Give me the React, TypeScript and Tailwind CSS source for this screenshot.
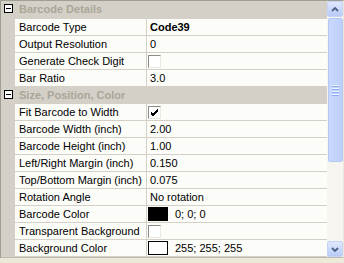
import React from 'react';

type Row = {
  name: string;
  value?: string;
  bold?: boolean;
  check?: boolean;
  swatch?: string;
};

type Section = { title: string; rows: Row[] };

const SECTIONS: Section[] = [
  {
    title: 'Barcode Details',
    rows: [
      { name: 'Barcode Type', value: 'Code39', bold: true },
      { name: 'Output Resolution', value: '0' },
      { name: 'Generate Check Digit', check: false },
      { name: 'Bar Ratio', value: '3.0' },
    ],
  },
  {
    title: 'Size, Position, Color',
    rows: [
      { name: 'Fit Barcode to Width', check: true },
      { name: 'Barcode Width (inch)', value: '2.00' },
      { name: 'Barcode Height (inch)', value: '1.00' },
      { name: 'Left/Right Margin (inch)', value: '0.150' },
      { name: 'Top/Bottom Margin (inch)', value: '0.075' },
      { name: 'Rotation Angle', value: 'No rotation' },
      { name: 'Barcode Color', swatch: 'bg-black', value: '0; 0; 0' },
      { name: 'Transparent Background', check: false },
      { name: 'Background Color', swatch: 'bg-white', value: '255; 255; 255' },
    ],
  },
];

function MinusBox() {
  return (
    <div className="w-[9px] h-[9px] border border-black bg-white flex items-center justify-center">
      <div className="w-[5px] h-[1px] bg-black" />
    </div>
  );
}

function CheckBox({ checked }: { checked: boolean }) {
  return (
    <div className="w-[13px] h-[13px] bg-white border-t border-l border-[#8c8c86] border-r-[#ebe9e2] border-b-[#ebe9e2] border-r border-b flex items-center justify-center">
      {checked && (
        <svg width="9" height="9" viewBox="0 0 9 9">
          <path d="M1 4 L3 6 L8 1 M1 5 L3 7 L8 2 M1 6 L3 8 L8 3" stroke="#000" strokeWidth="1" fill="none" />
        </svg>
      )}
    </div>
  );
}

function Header({ title, first }: { title: string; first: boolean }) {
  return (
    <div
      className={`flex h-[17px] bg-[#d4d0c8] ${first ? 'h-[16px]' : 'border-t border-[#d4d0c8]'}`}
    >
      <div className="w-[14px] flex justify-center pt-[3px] pl-[1px]">
        <MinusBox />
      </div>
      <div className="pl-[4px] leading-[16px] font-bold text-[#a9a697]">{title}</div>
    </div>
  );
}

function PropRow({ row }: { row: Row }) {
  return (
    <div className="flex h-[17px] border-t border-[#d4d0c8]">
      <div className="w-[14px] bg-[#d4d0c8]" />
      <div className="w-[132px] bg-[#fcfcf9] border-r border-[#d4d0c8] pl-[4px] leading-[16px] whitespace-nowrap overflow-hidden">
        {row.name}
      </div>
      <div className="flex-1 bg-[#fcfcf9] flex items-center whitespace-nowrap overflow-hidden">
        {row.check !== undefined ? (
          <div className="pl-[1px]">
            <CheckBox checked={row.check} />
          </div>
        ) : row.swatch ? (
          <>
            <div className={`ml-[1px] w-[20px] h-[14px] border border-black ${row.swatch}`} />
            <span className="pl-[7px] leading-[16px]">{row.value}</span>
          </>
        ) : (
          <span className={`pl-[3px] leading-[16px] ${row.bold ? 'font-bold' : ''}`}>{row.value}</span>
        )}
      </div>
    </div>
  );
}

function ScrollButton({ down }: { down?: boolean }) {
  return (
    <div className="h-[16px] rounded-[2px] border border-[#c4d4f8] bg-gradient-to-b from-[#dfe8fd] to-[#b8cbf8] flex items-center justify-center">
      <svg width="8" height="5" viewBox="0 0 8 5">
        <path
          d={down ? 'M1 1 L4 4 L7 1' : 'M1 4 L4 1 L7 4'}
          stroke="#4d6185"
          strokeWidth="1.8"
          fill="none"
        />
      </svg>
    </div>
  );
}

function ScrollBar() {
  return (
    <div className="w-[16px] flex flex-col bg-[#f6f5f0]">
      <ScrollButton />
      <div className="flex-1 pt-[1px] pl-[1px]">
        <div className="h-[144px] rounded-[2px] border border-[#b3c8f5] bg-gradient-to-r from-[#c9d8fd] to-[#bccffb] flex flex-col items-center justify-center gap-[1px]">
          {[0, 1, 2, 3].map((i) => (
            <div key={i} className="w-[7px] flex flex-col">
              <div className="h-[1px] bg-[#eef4ff]" />
              <div className="h-[1px] bg-[#8cabf0]" />
            </div>
          ))}
        </div>
      </div>
      <ScrollButton down />
    </div>
  );
}

export default function App() {
  return (
    <div className="w-[344px] h-[263px] bg-[#ece9d8] font-['Liberation_Sans',Arial,sans-serif] text-[11px] text-black select-none">
      <div className="h-[258px] flex border-t border-l border-[#a19e92] border-r border-r-[#e9e7de] border-b border-b-[#bdbab0] bg-[#d4d0c8]">
        <div className="flex-1 flex flex-col">
          {SECTIONS.map((s, si) => (
            <React.Fragment key={s.title}>
              <Header title={s.title} first={si === 0} />
              {s.rows.map((r) => (
                <PropRow key={r.name} row={r} />
              ))}
            </React.Fragment>
          ))}
        </div>
        <ScrollBar />
      </div>
    </div>
  );
}
